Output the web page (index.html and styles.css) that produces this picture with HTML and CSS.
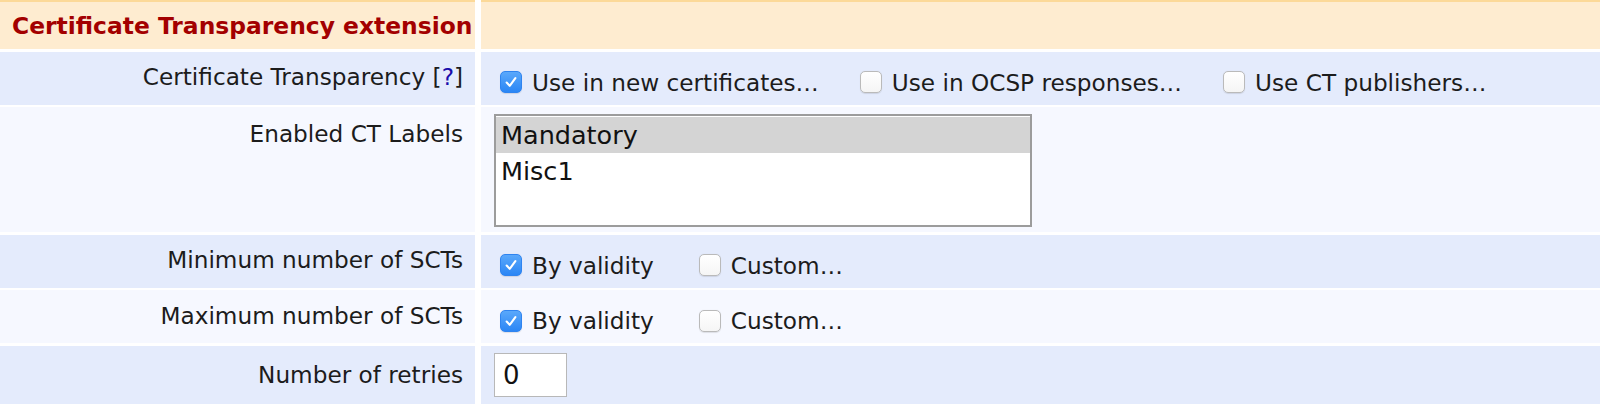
FILE: index.html
```html
<!DOCTYPE html>
<html>
<head>
<meta charset="utf-8">
<link rel="stylesheet" href="styles.css">
</head>
<body>
<div class="form">
  <div class="row head">
    <div class="lbl title"><span>Certificate Transparency extension</span></div>
    <div class="val"></div>
  </div>
  <div class="row blue">
    <div class="lbl"><span>Certificate Transparency [<a class="help">?</a>]</span></div>
    <div class="val tight">
      <label class="opt"><span class="cb on"><svg viewBox="0 0 22 22"><path d="M6.2 11.6 L9.6 15.2 L15.8 6.8"/></svg></span>Use in new certificates…</label>
      <label class="opt"><span class="cb"></span>Use in OCSP responses…</label>
      <label class="opt"><span class="cb"></span>Use CT publishers…</label>
    </div>
  </div>
  <div class="row light tall">
    <div class="lbl top"><span>Enabled CT Labels</span></div>
    <div class="val top">
      <div class="select">
        <div class="option sel">Mandatory</div>
        <div class="option">Misc1</div>
      </div>
    </div>
  </div>
  <div class="row blue">
    <div class="lbl"><span>Minimum number of SCTs</span></div>
    <div class="val">
      <label class="opt"><span class="cb on"><svg viewBox="0 0 22 22"><path d="M6.2 11.6 L9.6 15.2 L15.8 6.8"/></svg></span>By validity</label>
      <label class="opt"><span class="cb"></span>Custom…</label>
    </div>
  </div>
  <div class="row light">
    <div class="lbl"><span>Maximum number of SCTs</span></div>
    <div class="val">
      <label class="opt"><span class="cb on"><svg viewBox="0 0 22 22"><path d="M6.2 11.6 L9.6 15.2 L15.8 6.8"/></svg></span>By validity</label>
      <label class="opt"><span class="cb"></span>Custom…</label>
    </div>
  </div>
  <div class="row blue last">
    <div class="lbl"><span>Number of retries</span></div>
    <div class="val field">
      <div class="input">0</div>
    </div>
  </div>
</div>
</body>
</html>
```

FILE: styles.css
```css
html, body {
  margin: 0;
  padding: 0;
  background: #ffffff;
  overflow: hidden;
}
body {
  font-family: "DejaVu Sans", Verdana, sans-serif;
  font-size: 23.2px;
  color: #1c1c1c;
  width: 1600px;
  height: 404px;
}
.form {
  display: flex;
  flex-direction: column;
  gap: 2.5px;
}
.row {
  display: grid;
  grid-template-columns: 475px 1fr;
  column-gap: 6px;
  height: 53px;
}
.row.head { height: 49px; }
.row.tall { height: 125px; }
.row.last { height: 60px; }
.row.head > div {
  background: #feecd0;
  border-top: 2px solid #fcd998;
}
.row.blue > div { background: #e4ebfc; }
.row.light > div { background: #f6f8ff; }

.lbl {
  display: flex;
  align-items: center;
  justify-content: flex-end;
  padding-right: 12px;
  padding-bottom: 3px;
  white-space: nowrap;
}
.lbl.title {
  justify-content: flex-start;
  padding: 0 0 0 12px;
  font-weight: bold;
  color: #a30000;
  font-size: 23.4px;
}
.lbl.top {
  align-items: flex-start;
  padding-top: 13px;
  padding-bottom: 0;
}
.help { color: #1a0dab; }

.val {
  display: flex;
  align-items: center;
  padding-left: 19px;
  padding-top: 8px;
  gap: 45px;
  white-space: nowrap;
}
.val.tight { gap: 41px; }
.val.top {
  align-items: flex-start;
  padding-top: 7px;
  padding-left: 13px;
}
.val.field {
  align-items: flex-start;
  padding-top: 7.5px;
  padding-left: 13px;
}
.opt {
  display: flex;
  align-items: center;
  gap: 10px;
}
.cb {
  width: 20px;
  height: 20px;
  border: 1px solid #bababa;
  border-radius: 5px;
  background: linear-gradient(#ffffff, #f5f5f5);
  box-shadow: 0 0.5px 1px rgba(0,0,0,0.10);
  display: flex;
  align-items: center;
  justify-content: center;
  flex: none;
}
.cb.on {
  border-color: #2f84f0;
  background: linear-gradient(#5aa8fb, #2b86f5);
}
.cb svg {
  width: 22px;
  height: 22px;
  fill: none;
  stroke: #ffffff;
  stroke-width: 2.3;
  stroke-linecap: round;
  stroke-linejoin: round;
}
.select {
  width: 534px;
  height: 108px;
  border: 2px solid #9c9c9c;
  background: #ffffff;
  font-size: 25.5px;
  color: #111;
  padding-top: 1px;
  box-sizing: content-box;
}
.option {
  height: 36px;
  line-height: 36px;
  padding-left: 5px;
}
.option.sel { background: #d4d4d4; }
.input {
  border: 1px solid #b8b8b8;
  background: #ffffff;
  font-size: 26px;
  line-height: 42px;
  padding-left: 8px;
  box-sizing: border-box;
  width: 73px;
  height: 44px;
  color: #111;
}
```
